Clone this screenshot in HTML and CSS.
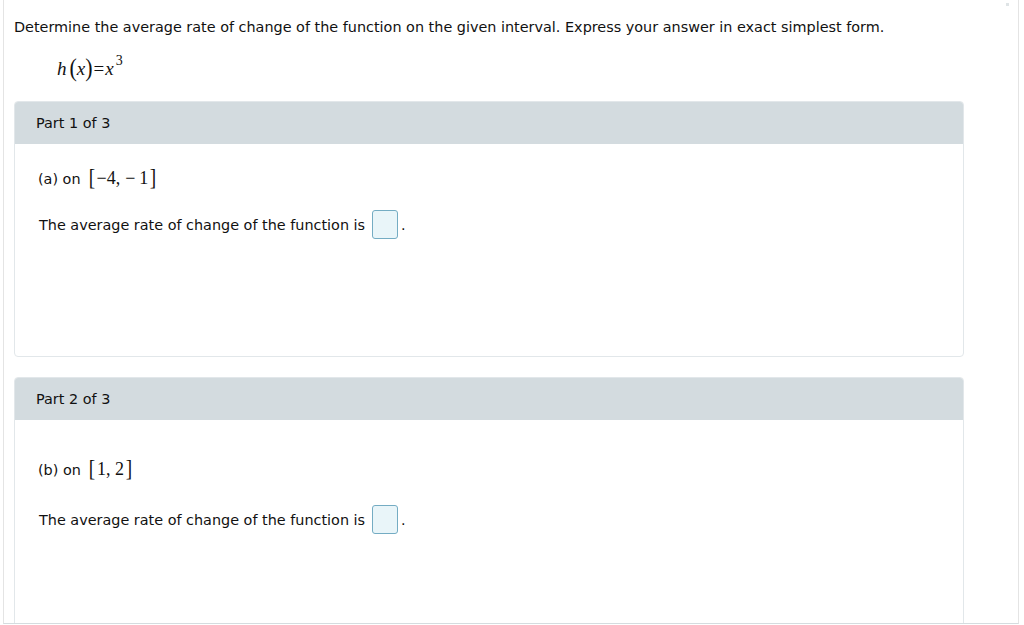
FILE: index.html
```html
<!DOCTYPE html>
<html>
<head>
<meta charset="utf-8">
<link rel="stylesheet" href="styles.css">
</head>
<body>
<div class="frame">
  <span class="corner"></span>
  <p class="prompt">Determine the average rate of change of the function on the given interval. Express your answer in exact simplest form.</p>
  <div class="formula"><span class="mi fn">h</span><span class="paren">(</span><span class="mi">x</span><span class="paren">)</span><span class="eq">=</span><span class="mi">x</span><sup class="exp">3</sup></div>

  <section class="card first">
    <div class="card-head">Part 1 of 3</div>
    <div class="card-body">
      <p class="q">(a) on <span class="interval"><span class="br">[</span>−4,<span class="neg">−</span>1<span class="br">]</span></span></p>
      <p class="ans">The average rate of change of the function is <span class="box"></span><span class="dot">.</span></p>
    </div>
  </section>

  <section class="card second">
    <div class="card-head">Part 2 of 3</div>
    <div class="card-body">
      <p class="q">(b) on <span class="interval"><span class="br">[</span>1, 2<span class="br">]</span></span></p>
      <p class="ans">The average rate of change of the function is <span class="box"></span><span class="dot">.</span></p>
    </div>
  </section>
</div>
</body>
</html>
```

FILE: styles.css
```css
html, body {
  margin: 0;
  padding: 0;
  background: #ffffff;
}
body {
  font-family: "DejaVu Sans", Verdana, sans-serif;
  color: #111;
  overflow: hidden;
}
.frame {
  position: relative;
  margin-left: 3px;
  width: 1016px;
  height: 624px;
  border-left: 1px solid #e4e4e4;
  border-right: 1px solid #e4e4e4;
  border-bottom: 1px solid #d5dcdf;
  padding: 0 10px;
  box-sizing: border-box;
  overflow: hidden;
}
.corner {
  position: absolute;
  right: 9px;
  top: 3px;
  width: 3px;
  height: 3px;
  background: #dfe4e6;
}
.prompt {
  margin: 0;
  padding-top: 18px;
  font-size: 14.4px;
  line-height: 18px;
}
.formula {
  font-family: "Liberation Serif", "Times New Roman", serif;
  font-size: 19px;
  margin: 17px 0 0 43px;
  height: 28px;
  line-height: 22px;
}
.mi { font-style: italic; }
.fn { margin-right: 3px; }
.paren {
  font-size: 22px;
  display: inline-block;
  transform: scaleY(1.1);
}
.eq { margin: 0 1px 0 1px; }
.exp {
  font-size: 14px;
  position: relative;
  top: -3px;
  margin-left: 2px;
}
.card {
  width: 950px;
  border: 1px solid #e2e7ea;
  border-radius: 4px;
  box-sizing: border-box;
  overflow: hidden;
}
.card.first { margin-top: 20px; height: 256px; }
.card.second { margin-top: 20px; height: 260px; }
.card-head {
  background: #d3dbdf;
  height: 42px;
  line-height: 42px;
  padding-left: 21px;
  font-size: 14.4px;
}
.card-body {
  padding-left: 23px;
}
.q {
  margin: 0;
  font-size: 14.4px;
  display: flex;
  align-items: center;
  gap: 6px;
}
.first .q { padding-top: 21px; }
.second .q { padding-top: 36px; }
.interval {
  font-family: "Liberation Serif", "Times New Roman", serif;
  font-size: 18px;
  display: inline-flex;
  align-items: center;
}
.neg { margin: 0 4px 0 5px; }
.br {
  font-size: 24px;
  font-weight: 300;
  display: inline-block;
  transform: scaleX(0.8);
  margin: 0 1px;
  position: relative;
  top: -1px;
}
.ans {
  margin: 0;
  font-size: 14.4px;
  display: flex;
  align-items: center;
  padding-left: 1px;
}
.first .ans { margin-top: 18px; }
.second .ans { margin-top: 22px; }
.box {
  display: inline-block;
  width: 24px;
  height: 27px;
  margin-left: 7px;
  background: #e9f5f9;
  border: 1px solid #74acc3;
  border-radius: 3px;
}
.dot { margin-left: 3px; }
```
